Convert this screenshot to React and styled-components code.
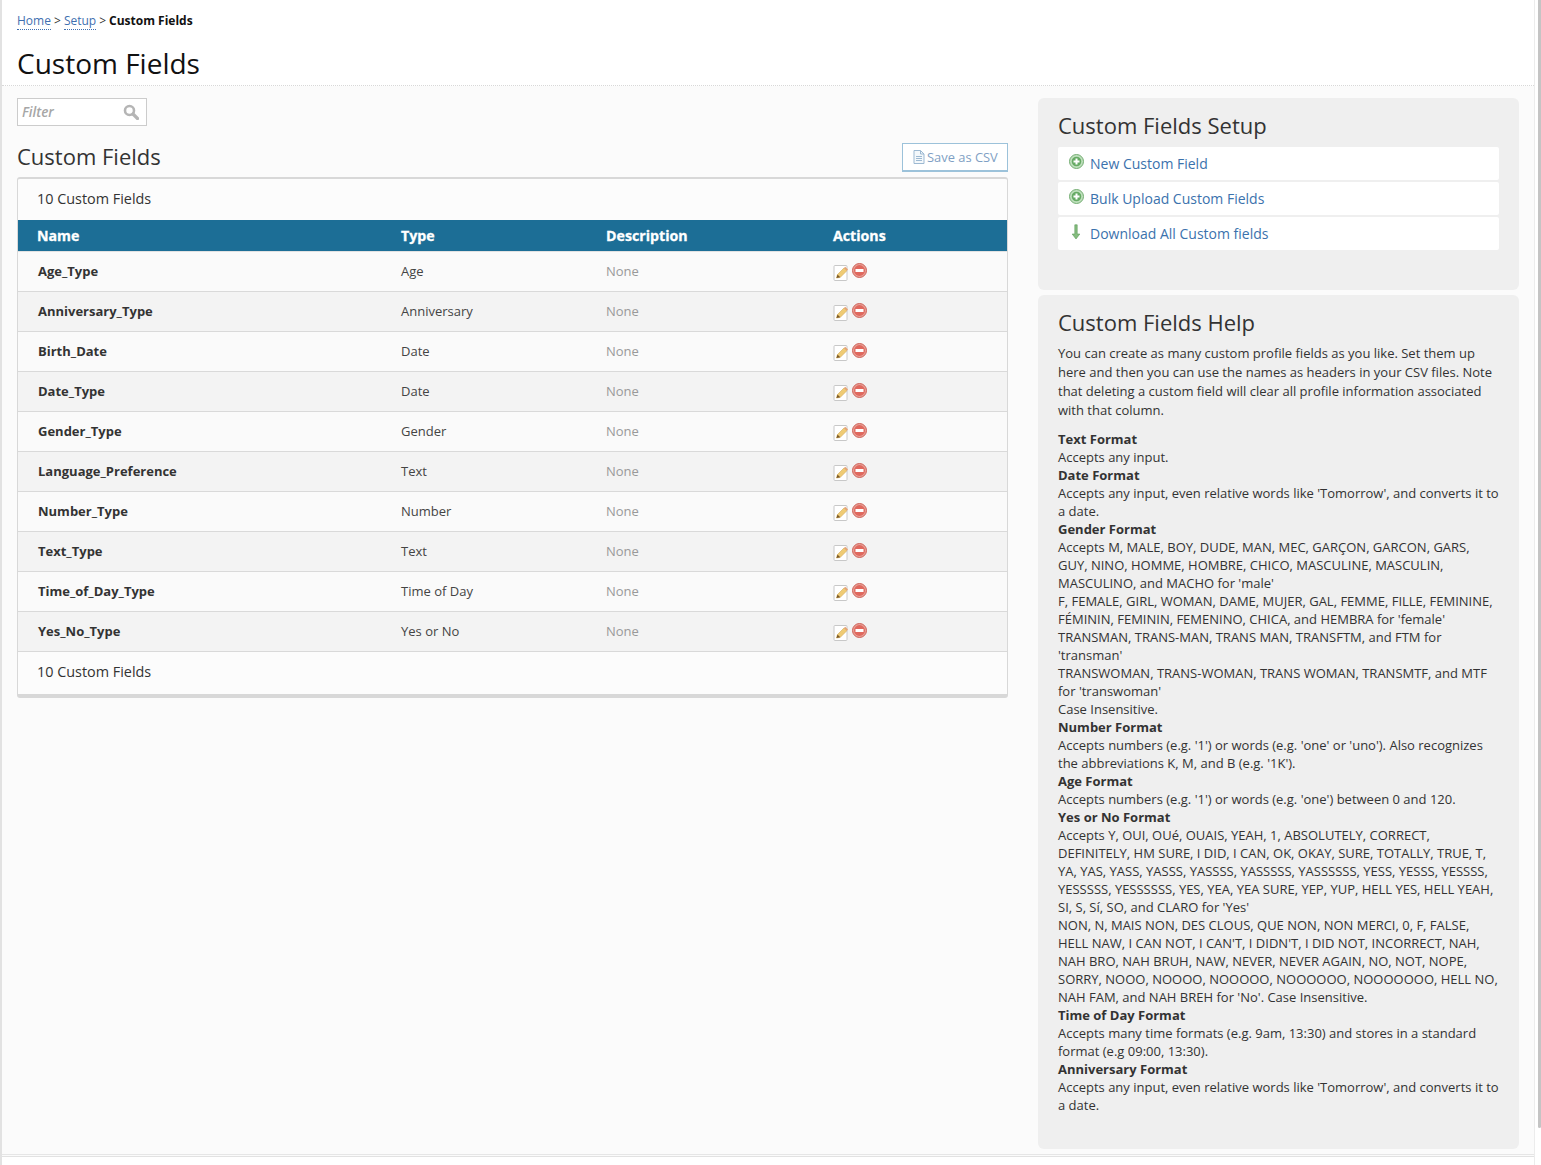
import React from 'react';
import styled, { createGlobalStyle } from 'styled-components';

const GlobalStyle = createGlobalStyle`
	html, body {
		margin: 0;
		padding: 0;
		background: #fff;
		font-family: "Open Sans", "Liberation Sans", sans-serif;
		color: #333;
	}
	* {
		box-sizing: border-box;
	}
`;

const Page = styled.div`
	position: relative;
	width: 1541px;
	height: 1165px;
	overflow: hidden;
	background: #fff;
`;

const Shell = styled.div`
	width: 1535px;
	height: 1165px;
	border-left: 2px solid #e2e2e2;
	border-right: 1px solid #ececec;
	background: #fbfbfb;
`;

const Header = styled.header`
	height: 86px;
	padding: 12px 15px 0;
	background: #fff;
	border-bottom: 1px dotted #d8d8d8;
`;

const Crumbs = styled.div`
	font-size: 12px;
	line-height: 17px;
	color: #333;
`;

const Crumb = styled.a`
	color: #3f6fb0;
	border-bottom: 1px dotted #3f6fb0;
	margin-right: 3px;
`;

const CrumbCurrent = styled.strong`
	font-weight: 700;
	color: #111;
	margin-left: 3px;
`;

const Title = styled.h1`
	margin: 12px 0 0;
	font-size: 28px;
	line-height: 44px;
	font-weight: 400;
	color: #111;
`;

const Columns = styled.div`
	display: grid;
	grid-template-columns: 991px 481px;
	gap: 30px;
	padding: 12px 0 0 15px;
`;

const FilterBox = styled.div`
	display: flex;
	align-items: center;
	justify-content: space-between;
	width: 130px;
	height: 28px;
	padding: 0 7px 0 4px;
	background: #fff;
	border: 1px solid #ccc;
	font-size: 13.5px;
	font-style: italic;
	font-weight: 600;
	color: #a6a6a6;
`;

const TitleRow = styled.div`
	display: flex;
	align-items: flex-end;
	justify-content: space-between;
	height: 51px;
	padding-bottom: 5px;
`;

const SectionTitle = styled.h2`
	margin: 0;
	font-size: 22px;
	line-height: 32px;
	font-weight: 400;
	color: #333;
`;

const CsvButton = styled.a`
	display: flex;
	align-items: center;
	gap: 2px;
	width: 106px;
	height: 29px;
	padding-left: 10px;
	border: 1px solid #9cc2da;
	border-bottom-width: 2px;
	background: #fff;
	font-size: 12.9px;
	color: #7f9fc4;
`;

const Panel = styled.div`
	border: 1px solid #d8d8d8;
	border-top-width: 2px;
	border-bottom-width: 4px;
	border-radius: 3px;
	background: #fcfcfc;
`;

const Count = styled.div`
	height: 41px;
	padding-left: 19px;
	font-size: 14.4px;
	line-height: 39px;
	color: #333;
`;

const FooterCount = styled(Count)`
	height: 42px;
	line-height: 40px;
`;

const Row = styled.div`
	display: grid;
	grid-template-columns: 363px 205px 227px 1fr;
	align-items: center;
	height: 40px;
	padding: 0 0 2px 20px;
	font-size: 13px;
	color: #444;
	background: ${props => (props.$odd ? '#f3f3f3' : '#fafafa')};
	border-bottom: 1px solid #d9d9d9;
`;

const HeadRow = styled.div`
	display: grid;
	grid-template-columns: 364px 205px 227px 1fr;
	align-items: center;
	height: 32px;
	padding-left: 19px;
	background: #1c6e96;
	border-bottom: 1px solid #e2e2e2;
	font-size: 14.2px;
	font-weight: 700;
	color: #fff;
	-webkit-text-stroke: 0.3px #fff;
`;

const NameCell = styled.span`
	font-weight: 700;
	color: #333;
`;

const NoneCell = styled.span`
	color: #999;
`;

const Actions = styled.span`
	display: flex;
	align-items: flex-start;
	gap: 3px;
	margin-top: 2px;
`;

const Side = styled.aside`
	display: flex;
	flex-direction: column;
	gap: 5px;
`;

const Box = styled.section`
	height: ${props => props.$height}px;
	padding: 11px 20px 0;
	background: #efefef;
	border-radius: 6px;
`;

const BoxTitle = styled.h2`
	margin: 0 0 6px;
	font-size: 22px;
	line-height: 32px;
	font-weight: 400;
	color: #333;
`;

const SetupLink = styled.a`
	display: flex;
	align-items: center;
	height: 33px;
	margin-bottom: 2px;
	padding-left: 10px;
	background: #fff;
	border-radius: 2px;
	font-size: 14px;
	color: #3b72ad;
`;

const IconSlot = styled.span`
	display: flex;
	justify-content: center;
	width: 16px;
	margin-right: 6px;
	margin-top: -4px;
`;

const HelpText = styled.div`
	margin-bottom: 10px;
	font-size: 13px;
	line-height: 19px;
	color: #333;
	white-space: pre-line;
`;

const HelpLabel = styled.div`
	font-size: 13px;
	line-height: 18px;
	font-weight: 700;
	color: #333;
`;

const HelpBody = styled.div`
	font-size: 13px;
	line-height: 18px;
	color: #333;
	white-space: pre-line;
`;

const Footer = styled.div`
	height: 9px;
	margin-top: 7px;
	background: #fff;
	border-top: 1px solid #e2e2e2;
	box-shadow: 0 -1px 0 #fbfbfb, 0 -2px 0 #e6e6e6;
`;

const Scroller = styled.div`
	position: absolute;
	top: 0;
	right: 0;
	width: 3px;
	height: 1128px;
	background: #c4c4c4;
	border-radius: 0 0 2px 2px;
`;

const SearchIcon = () => (
	<svg width="16" height="16" viewBox="0 0 16 16">
		<circle cx="6.500" cy="6.500" r="4.500" fill="none" stroke="#b5b5b5" strokeWidth="2.600" />
		<path d="M10 10l4.500 4.500" stroke="#b5b5b5" strokeWidth="3.200" strokeLinecap="round" />
	</svg>
);

const DocIcon = () => (
	<svg width="12" height="14" viewBox="0 0 12 14">
		<path d="M1 .5h6.500l3.500 3.500v9.500H1z" fill="#f4f8fb" stroke="#9db9d2" />
		<path d="M7.500.5V4H11M3 6.500h6M3 8.500h6M3 10.500h6" fill="none" stroke="#9db9d2" />
	</svg>
);

const EditIcon = () => (
	<svg width="16" height="18" viewBox="0 0 16 18">
		<rect x="1" y="2.500" width="13" height="15" rx="1" fill="#fff" stroke="#c8c8c8" />
		<path d="M3.500 15l1-3.500 6.500-6.500 2.800 2.800L7.300 14.300z" fill="#efcb74" stroke="#d1aa58" strokeWidth=".6" />
		<path d="M3.500 15l1-3.500 2.800 2.800z" fill="#7b5a2a" />
		<path d="M11 5l1.200-1.200 2.800 2.800-1.200 1.200z" fill="#e6a277" />
	</svg>
);

const DeleteIcon = () => (
	<svg width="15" height="15" viewBox="0 0 15 15">
		<circle cx="7.500" cy="7.500" r="7" fill="#e7a097" stroke="#cf6258" />
		<circle cx="7.500" cy="7.500" r="5.400" fill="#e0685e" />
		<rect x="3.500" y="6" width="8" height="3" fill="#fff" />
	</svg>
);

const PlusIcon = () => (
	<svg width="15" height="15" viewBox="0 0 15 15">
		<circle cx="7.500" cy="7.500" r="7" fill="#bfe0bd" stroke="#74ad72" />
		<circle cx="7.500" cy="7.500" r="4.800" fill="#66aa64" />
		<path d="M7.500 4.500v6M4.500 7.500h6" stroke="#fff" strokeWidth="2" />
	</svg>
);

const DownIcon = () => (
	<svg width="10" height="16" viewBox="0 0 10 16">
		<path d="M3.800 .8h2.400v9.200H8.800L5 15 1.200 10h2.600z" fill="#86bd80" stroke="#5b9a58" strokeWidth=".6" />
	</svg>
);

const fields = [
	['Age_Type', 'Age'],
	['Anniversary_Type', 'Anniversary'],
	['Birth_Date', 'Date'],
	['Date_Type', 'Date'],
	['Gender_Type', 'Gender'],
	['Language_Preference', 'Text'],
	['Number_Type', 'Number'],
	['Text_Type', 'Text'],
	['Time_of_Day_Type', 'Time of Day'],
	['Yes_No_Type', 'Yes or No'],
];

const formats = [
	['Text Format', 'Accepts any input.'],
	['Date Format', "Accepts any input, even relative words like 'Tomorrow', and converts it to\na date."],
	['Gender Format', "Accepts M, MALE, BOY, DUDE, MAN, MEC, GARÇON, GARCON, GARS,\nGUY, NINO, HOMME, HOMBRE, CHICO, MASCULINE, MASCULIN,\nMASCULINO, and MACHO for 'male'\nF, FEMALE, GIRL, WOMAN, DAME, MUJER, GAL, FEMME, FILLE, FEMININE,\nFÉMININ, FEMININ, FEMENINO, CHICA, and HEMBRA for 'female'\nTRANSMAN, TRANS-MAN, TRANS MAN, TRANSFTM, and FTM for\n'transman'\nTRANSWOMAN, TRANS-WOMAN, TRANS WOMAN, TRANSMTF, and MTF\nfor 'transwoman'\nCase Insensitive."],
	['Number Format', "Accepts numbers (e.g. '1') or words (e.g. 'one' or 'uno'). Also recognizes\nthe abbreviations K, M, and B (e.g. '1K')."],
	['Age Format', "Accepts numbers (e.g. '1') or words (e.g. 'one') between 0 and 120."],
	['Yes or No Format', "Accepts Y, OUI, OUé, OUAIS, YEAH, 1, ABSOLUTELY, CORRECT,\nDEFINITELY, HM SURE, I DID, I CAN, OK, OKAY, SURE, TOTALLY, TRUE, T,\nYA, YAS, YASS, YASSS, YASSSS, YASSSSS, YASSSSSS, YESS, YESSS, YESSSS,\nYESSSSS, YESSSSSS, YES, YEA, YEA SURE, YEP, YUP, HELL YES, HELL YEAH,\nSI, S, Sí, SO, and CLARO for 'Yes'\nNON, N, MAIS NON, DES CLOUS, QUE NON, NON MERCI, 0, F, FALSE,\nHELL NAW, I CAN NOT, I CAN'T, I DIDN'T, I DID NOT, INCORRECT, NAH,\nNAH BRO, NAH BRUH, NAW, NEVER, NEVER AGAIN, NO, NOT, NOPE,\nSORRY, NOOO, NOOOO, NOOOOO, NOOOOOO, NOOOOOOO, HELL NO,\nNAH FAM, and NAH BREH for 'No'. Case Insensitive."],
	['Time of Day Format', 'Accepts many time formats (e.g. 9am, 13:30) and stores in a standard\nformat (e.g 09:00, 13:30).'],
	['Anniversary Format', "Accepts any input, even relative words like 'Tomorrow', and converts it to\na date."],
];

export default function App() {
	return (
		<Page>
			<GlobalStyle />
			<Shell>
				<Header>
					<Crumbs>
						<Crumb>Home</Crumb>&gt; <Crumb>Setup</Crumb>&gt;<CrumbCurrent>Custom Fields</CrumbCurrent>
					</Crumbs>
					<Title>Custom Fields</Title>
				</Header>
				<Columns>
					<main>
						<FilterBox>
							Filter
							<SearchIcon />
						</FilterBox>
						<TitleRow>
							<SectionTitle>Custom Fields</SectionTitle>
							<CsvButton>
								<DocIcon />
								Save as CSV
							</CsvButton>
						</TitleRow>
						<Panel>
							<Count>10 Custom Fields</Count>
							<HeadRow>
								<span>Name</span>
								<span>Type</span>
								<span>Description</span>
								<span>Actions</span>
							</HeadRow>
							{fields.map(([name, type], i) => (
								<Row key={name} $odd={i % 2 === 1}>
									<NameCell>{name}</NameCell>
									<span>{type}</span>
									<NoneCell>None</NoneCell>
									<Actions>
										<EditIcon />
										<DeleteIcon />
									</Actions>
								</Row>
							))}
							<FooterCount>10 Custom Fields</FooterCount>
						</Panel>
					</main>
					<Side>
						<Box $height={192}>
							<BoxTitle>Custom Fields Setup</BoxTitle>
							<SetupLink>
								<IconSlot><PlusIcon /></IconSlot>
								New Custom Field
							</SetupLink>
							<SetupLink>
								<IconSlot><PlusIcon /></IconSlot>
								Bulk Upload Custom Fields
							</SetupLink>
							<SetupLink>
								<IconSlot><DownIcon /></IconSlot>
								Download All Custom fields
							</SetupLink>
						</Box>
						<Box $height={854}>
							<BoxTitle>Custom Fields Help</BoxTitle>
							<HelpText>
								{"You can create as many custom profile fields as you like. Set them up\nhere and then you can use the names as headers in your CSV files. Note\nthat deleting a custom field will clear all profile information associated\nwith that column."}
							</HelpText>
							{formats.map(([label, body]) => (
								<React.Fragment key={label}>
									<HelpLabel>{label}</HelpLabel>
									<HelpBody>{body}</HelpBody>
								</React.Fragment>
							))}
						</Box>
					</Side>
				</Columns>
				<Footer />
			</Shell>
			<Scroller />
		</Page>
	);
}
